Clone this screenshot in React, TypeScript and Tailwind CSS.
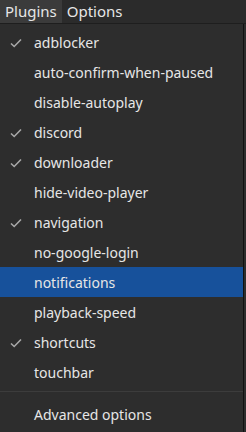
import React from 'react';

const plugins: { name: string; on: boolean }[] = [
  { name: 'adblocker', on: true },
  { name: 'auto-confirm-when-paused', on: false },
  { name: 'disable-autoplay', on: false },
  { name: 'discord', on: true },
  { name: 'downloader', on: true },
  { name: 'hide-video-player', on: false },
  { name: 'navigation', on: true },
  { name: 'no-google-login', on: false },
  { name: 'notifications', on: false },
  { name: 'playback-speed', on: false },
  { name: 'shortcuts', on: true },
  { name: 'touchbar', on: false },
];

function Check() {
  return (
    <svg width="12" height="10" viewBox="0 0 12 10" fill="none" stroke="#a8a8a8" strokeWidth="1.6">
      <path d="M1 5.5 L4.2 8.5 L11 1.5" />
    </svg>
  );
}

export default function App() {
  const active = 'notifications';
  return (
    <div
      className="w-[246px] h-[432px] overflow-hidden bg-[#2d2d2d] text-[#e6e6e6] flex flex-col"
      style={{ fontFamily: '"Noto Sans", "Open Sans", sans-serif' }}
    >
      {/* Menu bar */}
      <div className="h-[24px] flex items-stretch bg-[#2b2b2b] border-b border-[#1e1e1e] text-[15px] shrink-0">
        <div className="px-[5px] flex items-center bg-[#3b3b3b]">Plugins</div>
        <div className="px-[5px] flex items-center">Options</div>
      </div>

      {/* Dropdown */}
      <div className="flex-1 flex">
        <div className="w-[244px] border-r border-[#111] pt-[3px] text-[14px] flex flex-col">
          {plugins.map((p) => (
            <div
              key={p.name}
              className={
                'h-[30px] flex items-center shrink-0 pt-px ' +
                (p.name === active ? 'bg-[#17519b]' : '')
              }
            >
              <span className="w-[34px] pl-[10px] flex items-center">{p.on && <Check />}</span>
              <span>{p.name}</span>
            </div>
          ))}
          <div className="h-px bg-[#3c3c3c] mt-[4px] mb-[6px]" />
          <div className="h-[30px] flex items-center pl-[34px] pt-[2px] shrink-0">Advanced options</div>
        </div>
        <div className="flex-1 bg-[#2d2d2d]" />
      </div>
    </div>
  );
}
